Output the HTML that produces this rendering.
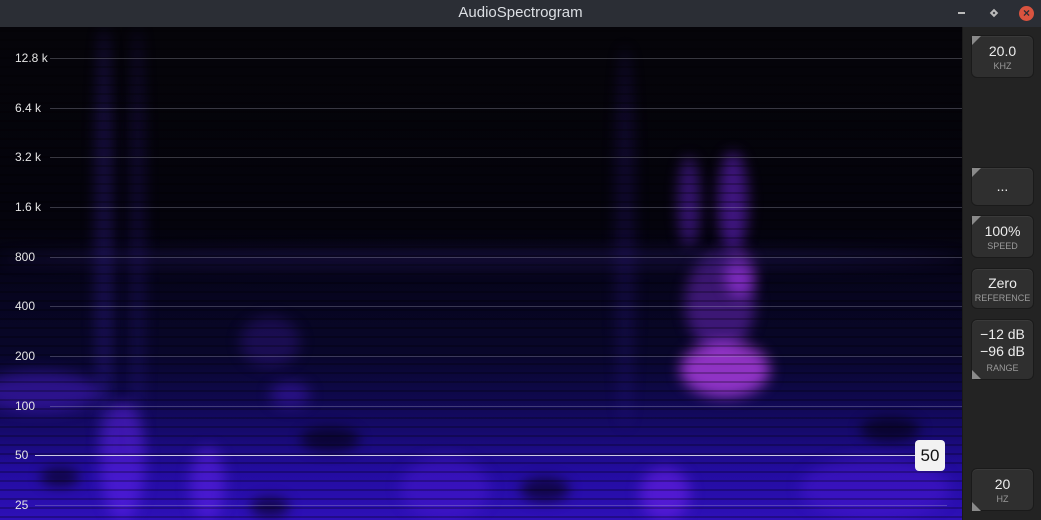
<!DOCTYPE html>
<html><head><meta charset="utf-8"><style>
*{margin:0;padding:0;box-sizing:border-box}
body{width:1041px;height:520px;overflow:hidden;background:#000;font-family:"Liberation Sans","DejaVu Sans",sans-serif;position:relative}
#title{position:absolute;left:0;top:0;width:1041px;height:27px;background:#2b2e35;color:#dcdfe4;font-size:15px;text-align:center;line-height:26px}
#spec{position:absolute;left:0;top:27px;width:962px;height:493px;overflow:hidden;
background:linear-gradient(to bottom,#050409 0%,#04030c 40%,#070520 55%,#08062a 66%,#0e0848 74%,#160a6c 82%,#230ca0 90%,#2e10b8 100%);}
#noise{position:absolute;left:0;top:0;width:962px;height:493px;
background:repeating-linear-gradient(to bottom,rgba(0,0,0,0) 0 3px,rgba(0,0,0,0.25) 3px 5px,rgba(0,0,0,0) 5px 9px)}
.b{position:absolute;border-radius:50%;filter:blur(7px)}
.d{position:absolute;border-radius:50%;filter:blur(6px);background:rgba(0,0,0,0.55)}
#side{position:absolute;left:962px;top:27px;width:79px;height:493px;background:#232323;border-left:1px solid #1a1a1a}
.btn{position:absolute;left:8px;width:63px;background:#2f2f2f;border:1px solid #1a1a1a;border-radius:6px;color:#ececec;text-align:center;font-size:14px;box-shadow:inset 0 1px 0 #3a3a3a}
.btn small{display:block;font-size:9px;color:#9a9a9a;margin-top:2px}
.tri{position:absolute;width:0;height:0}
.lbl{position:absolute;left:15px;color:#e6e6e6;font-size:12px}
.ln{position:absolute;left:50px;width:912px;height:1px;background:rgba(180,180,200,0.3)}
</style></head><body>
<div id="title">AudioSpectrogram</div>
<div style="position:absolute;left:958px;top:12px;width:7px;height:2px;background:#bbb"></div>
<div style="position:absolute;left:991px;top:10px;width:6px;height:6px;border:2px solid #bbb;transform:rotate(45deg)"></div>
<div style="position:absolute;left:1019px;top:6px;width:15px;height:15px;border-radius:50%;background:#d9533f;color:#2b2e35;font-size:12px;font-weight:bold;text-align:center;line-height:15px">×</div>
<div id="spec">
 <div class="b" style="left:95px;top:0;width:18px;height:430px;background:rgba(70,40,200,0.28)"></div>
 <div class="b" style="left:130px;top:0;width:15px;height:430px;background:rgba(60,30,180,0.22)"></div>
 <div class="b" style="left:615px;top:20px;width:20px;height:380px;background:rgba(60,30,180,0.2)"></div>
 <div class="b" style="left:678px;top:130px;width:22px;height:90px;background:rgba(110,40,230,0.45)"></div>
 <div class="b" style="left:718px;top:125px;width:30px;height:100px;background:rgba(120,40,240,0.5)"></div>
 <div class="b" style="left:685px;top:225px;width:70px;height:100px;background:rgba(140,50,240,0.4)"></div>
 <div class="b" style="left:725px;top:225px;width:30px;height:45px;background:rgba(180,60,255,0.55)"></div>
 <div class="b" style="left:680px;top:315px;width:90px;height:55px;background:rgba(200,70,255,0.7)"></div>
 <div class="b" style="left:0;top:222px;width:962px;height:20px;background:rgba(40,25,110,0.35)"></div>
 <div class="b" style="left:240px;top:290px;width:60px;height:50px;background:rgba(70,30,180,0.3)"></div>
 <div class="b" style="left:270px;top:355px;width:40px;height:25px;background:rgba(80,30,220,0.4)"></div>
 <div class="b" style="left:-20px;top:345px;width:120px;height:40px;background:rgba(80,30,220,0.45)"></div>
 <div class="b" style="left:100px;top:375px;width:45px;height:118px;background:rgba(110,40,255,0.45)"></div>
 <div class="b" style="left:190px;top:420px;width:35px;height:73px;background:rgba(110,40,250,0.45)"></div>
 <div class="b" style="left:400px;top:430px;width:90px;height:63px;background:rgba(90,30,230,0.35)"></div>
 <div class="b" style="left:640px;top:440px;width:50px;height:53px;background:rgba(130,40,255,0.45)"></div>
 <div class="b" style="left:800px;top:430px;width:150px;height:63px;background:rgba(90,30,230,0.35)"></div>
 <div class="d" style="left:40px;top:440px;width:40px;height:20px"></div>
 <div class="d" style="left:300px;top:400px;width:60px;height:25px"></div>
 <div class="d" style="left:520px;top:450px;width:50px;height:25px"></div>
 <div class="d" style="left:860px;top:390px;width:60px;height:25px"></div>
 <div class="d" style="left:250px;top:470px;width:40px;height:20px"></div>
 <div id="noise"></div>
</div>
<div class="ln" style="top:58px"></div><div class="lbl" style="top:51px">12.8 k</div>
<div class="ln" style="top:108px"></div><div class="lbl" style="top:101px">6.4 k</div>
<div class="ln" style="top:157px"></div><div class="lbl" style="top:150px">3.2 k</div>
<div class="ln" style="top:207px"></div><div class="lbl" style="top:200px">1.6 k</div>
<div class="ln" style="top:257px"></div><div class="lbl" style="top:250px">800</div>
<div class="ln" style="top:306px"></div><div class="lbl" style="top:299px">400</div>
<div class="ln" style="top:356px"></div><div class="lbl" style="top:349px">200</div>
<div class="ln" style="top:406px"></div><div class="lbl" style="top:399px">100</div>
<div class="ln" style="top:455px;left:35px;width:880px;background:rgba(235,235,245,0.85)"></div><div class="lbl" style="top:448px">50</div>
<div class="ln" style="top:505px;left:35px"></div><div class="lbl" style="top:498px">25</div>
<div style="position:absolute;left:915px;top:440px;width:30px;height:31px;background:#f2f2f2;border-radius:4px;color:#111;font-size:17px;text-align:center;line-height:31px">50</div>
<div id="side">
 <div class="btn" style="top:8px;height:43px;padding-top:7px">20.0<small>KHZ</small></div>
 <div class="btn" style="top:140px;height:39px;line-height:36px">...</div>
 <div class="btn" style="top:188px;height:43px;padding-top:7px">100%<small>SPEED</small></div>
 <div class="btn" style="top:241px;height:41px;padding-top:6px">Zero<small>REFERENCE</small></div>
 <div class="btn" style="top:292px;height:61px;padding-top:6px;line-height:17px">−12 dB<br>−96 dB<small style="line-height:12px">RANGE</small></div>
 <div class="btn" style="top:441px;height:43px;padding-top:7px">20<small>HZ</small></div>
</div>
<div class="tri" style="left:972px;top:36px;border-top:9px solid #8a8a8a;border-right:9px solid transparent"></div>
<div class="tri" style="left:972px;top:168px;border-top:9px solid #8a8a8a;border-right:9px solid transparent"></div>
<div class="tri" style="left:972px;top:216px;border-top:9px solid #8a8a8a;border-right:9px solid transparent"></div>
<div class="tri" style="left:972px;top:370px;border-bottom:9px solid #8a8a8a;border-right:9px solid transparent"></div>
<div class="tri" style="left:972px;top:502px;border-bottom:9px solid #8a8a8a;border-right:9px solid transparent"></div>
</body></html>
